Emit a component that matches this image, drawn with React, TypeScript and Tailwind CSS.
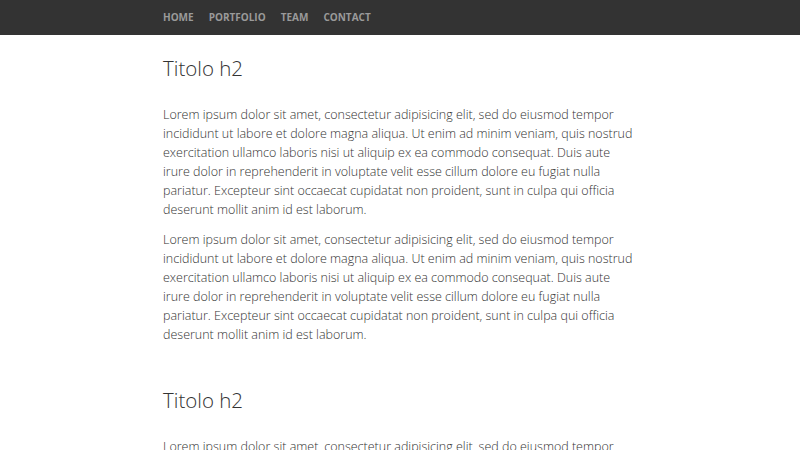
import React from "react";

const lorem =
  "Lorem ipsum dolor sit amet, consectetur adipisicing elit, sed do eiusmod tempor incididunt ut labore et dolore magna aliqua. Ut enim ad minim veniam, quis nostrud exercitation ullamco laboris nisi ut aliquip ex ea commodo consequat. Duis aute irure dolor in reprehenderit in voluptate velit esse cillum dolore eu fugiat nulla pariatur. Excepteur sint occaecat cupidatat non proident, sunt in culpa qui officia deserunt mollit anim id est laborum.";

const links = ["Home", "Portfolio", "Team", "Contact"];

function Section({ paragraphs }: { paragraphs: number }) {
  return (
    <section className="pb-[12px]">
      <h2 className="text-[20.5px] font-light leading-[30px] text-[#333] mt-[18px] mb-[22px]">
        Titolo h2
      </h2>
      {Array.from({ length: paragraphs }).map((_, i) => (
        <p key={i} className="mb-[11px]">
          {lorem}
        </p>
      ))}
    </section>
  );
}

export default function App() {
  return (
    <div
      className="min-h-screen bg-white text-[#333]"
      style={{ fontFamily: '"Open Sans", sans-serif' }}
    >
      {/* Navbar */}
      <nav className="h-[35px] bg-[#333333]">
        <div className="w-[474px] mx-auto h-full flex items-center gap-[15px]">
          {links.map((l) => (
            <a
              key={l}
              href="#"
              className="text-[10px] font-bold uppercase text-[#9a9a9a]"
            >
              {l}
            </a>
          ))}
        </div>
      </nav>

      <main className="w-[474px] mx-auto text-[12.5px] font-light leading-[19px] text-[#333]">
        <Section paragraphs={2} />
        <Section paragraphs={2} />
      </main>
    </div>
  );
}
